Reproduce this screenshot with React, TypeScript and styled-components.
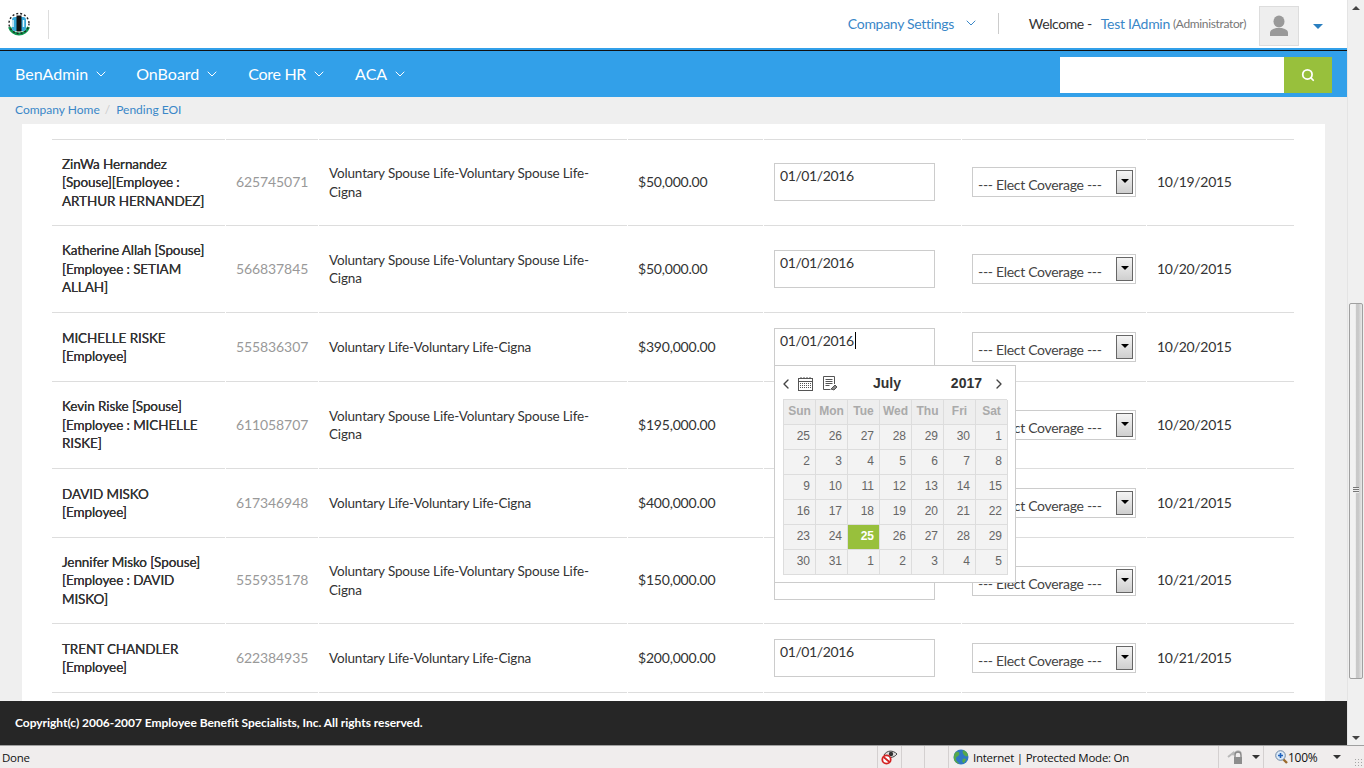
import React from "react";
import styled, { createGlobalStyle } from "styled-components";
import { ChevronDown, ChevronLeft, ChevronRight, Search } from "lucide-react";

const GlobalStyle = createGlobalStyle`
    html, body {
        margin: 0;
        padding: 0;
        height: 100%;
        overflow: hidden;
        font-family: "Lato", "Liberation Sans", sans-serif;
        color: #333;
    }
`;

const Shell = styled.div`
    display: flex;
    flex-direction: column;
    width: 1364px;
    height: 768px;
    overflow: hidden;
`;

const Viewport = styled.div`
    display: flex;
    height: 745px;
`;

const Page = styled.div`
    display: flex;
    flex-direction: column;
    width: 1347px;
    background: #efefef;
`;

const TopBar = styled.header`
    display: flex;
    align-items: center;
    height: 48px;
    background: #fff;
    flex: none;
`;

const LogoWrap = styled.div`
    display: flex;
    align-items: center;
    width: 49px;
    height: 29px;
    padding-left: 7px;
    box-sizing: border-box;
    border-right: 1px solid #ddd;
`;

const TopRight = styled.div`
    display: flex;
    align-items: center;
    margin-left: auto;
    height: 48px;
    padding-bottom: 2px;
    box-sizing: border-box;
`;

const SettingsLink = styled.a`
    display: flex;
    align-items: center;
    gap: 9px;
    width: 150px;
    height: 21px;
    font-size: 14px;
    letter-spacing: -0.3px;
    color: #3a87c8;
    border-right: 1px solid #ccc;
`;

const Welcome = styled.span`
    margin-left: 30px;
    font-size: 14px;
    letter-spacing: -0.4px;
    color: #333;
`;

const UserName = styled.a`
    margin-left: 9px;
    font-size: 14px;
    letter-spacing: -0.3px;
    color: #3a87c8;
`;

const Role = styled.span`
    margin-left: 3px;
    font-size: 12px;
    letter-spacing: -0.35px;
    color: #777;
`;

const Avatar = styled.div`
    display: flex;
    align-items: center;
    justify-content: center;
    width: 40px;
    height: 40px;
    margin-left: 13px;
    margin-top: 6px;
    box-sizing: border-box;
    background: #eee;
    border: 1px solid #ddd;
`;

const Caret = styled.span`
    width: 0;
    height: 0;
    margin: 6px 24px 0 14px;
    border-left: 5px solid transparent;
    border-right: 5px solid transparent;
    border-top: 5px solid #2a7fc0;
`;

const NavBar = styled.nav`
    display: flex;
    align-items: center;
    flex: none;
    height: 49px;
    box-sizing: border-box;
    padding: 3px 15px 0;
    background: #32a0e9;
    border-top: 2px solid #32a0e9;
    box-shadow: inset 0 1px 0 #111;
`;

const NavItem = styled.a<{ $gap: number; $tight?: boolean }>`
    display: flex;
    align-items: center;
    gap: 5px;
    margin-top: -4px;
    margin-right: ${(p) => p.$gap}px;
    font-size: 16px;
    letter-spacing: ${(p) => (p.$tight ? "-0.3px" : "0")};
    color: #fff;
    svg {
        margin-top: 2px;
    }
`;

const SearchBox = styled.div`
    display: flex;
    margin-left: auto;
    height: 36px;
`;

const SearchInput = styled.div`
    width: 224px;
    background: #fff;
`;

const SearchButton = styled.div`
    display: flex;
    align-items: center;
    justify-content: center;
    width: 48px;
    background: #98c03c;
`;

const Breadcrumb = styled.div`
    display: flex;
    align-items: center;
    flex: none;
    height: 27px;
    padding: 0 15px 2px;
    box-sizing: border-box;
    font-size: 12px;
    color: #3a87c8;
`;

const Slash = styled.span`
    margin: 0 6px 0 5px;
    color: #ccc;
`;

const Card = styled.main`
    flex: 1;
    margin: 0 22px;
    padding: 15px 31px 0 30px;
    min-height: 0;
    overflow: hidden;
    background: #fff;
`;

const Row = styled.div<{ $height: number }>`
    display: grid;
    grid-template-columns: 173px 92px 308px 135px 197px 184px 147px;
    column-gap: 1px;
    height: ${(p) => p.$height}px;
`;

const Cell = styled.div`
    display: flex;
    align-items: center;
    min-width: 0;
    padding: 0 10px;
    border-top: 1px solid #ddd;
    font-size: 14px;
    line-height: 18.5px;
    color: #333;
`;

const NameCell = styled(Cell)`
    font-size: 13.5px;
    letter-spacing: -0.1px;
    text-shadow: 0 0 0.5px #333;
`;

const SsnCell = styled(Cell)`
    letter-spacing: -0.1px;
    color: #999;
`;

const PlanCell = styled(Cell)`
    font-size: 13.5px;
    letter-spacing: -0.16px;
`;

const AmountCell = styled(Cell)`
    letter-spacing: -0.2px;
`;

const EffectiveCell = styled(Cell)`
    letter-spacing: -0.3px;
`;

const DateField = styled.div<{ $lift?: boolean }>`
    position: relative;
    width: 161px;
    height: 38px;
    margin-top: ${(p) => (p.$lift ? "-1px" : "0")};
    box-sizing: border-box;
    padding: 3px 5px;
    background: #fff;
    border: 1px solid #ccc;
    letter-spacing: -0.4px;
`;

const TextCursor = styled.span`
    display: inline-block;
    width: 1px;
    height: 17px;
    margin-left: 1px;
    background: #000;
    vertical-align: -3px;
`;

const SelectBox = styled.div<{ $lift?: boolean }>`
    display: flex;
    align-items: center;
    justify-content: space-between;
    width: 164px;
    height: 30px;
    margin-top: ${(p) => (p.$lift ? "-1px" : "0")};
    padding: 2px 2px 2px 5px;
    box-sizing: border-box;
    border: 1px solid #ccc;
    font-size: 14px;
    letter-spacing: -0.3px;
    color: #444;
`;

const SelectText = styled.span`
    padding-top: 7px;
`;

const SelectArrow = styled.span`
    display: flex;
    align-items: center;
    justify-content: center;
    flex: none;
    width: 17px;
    height: 24px;
    box-sizing: border-box;
    background: linear-gradient(#f4f4f4, #cfcfcf);
    border: 1px solid #666;
    &::after {
        content: "";
        margin-top: -2px;
        border-left: 4px solid transparent;
        border-right: 4px solid transparent;
        border-top: 4px solid #000;
    }
`;

const Calendar = styled.div`
    position: absolute;
    top: 36px;
    left: -1px;
    z-index: 5;
    width: 242px;
    height: 218px;
    box-sizing: border-box;
    padding: 0 8px;
    background: #fff;
    border: 1px solid #ccc;
    font-family: "Liberation Sans", Arial, sans-serif;
    letter-spacing: 0;
`;

const CalHeader = styled.div`
    display: flex;
    align-items: center;
    height: 33px;
    padding-top: 2px;
    box-sizing: border-box;
    font-size: 14px;
    font-weight: 700;
    color: #333;
`;

const CalMonth = styled.span`
    margin-left: 35px;
`;

const CalYear = styled.span`
    margin-left: auto;
    margin-right: 9px;
`;

const CalGrid = styled.div`
    display: grid;
    grid-template-columns: repeat(7, 32px);
    grid-auto-rows: 25px;
    width: 224px;
    box-sizing: border-box;
    border-top: 1px solid #ddd;
    border-left: 1px solid #ddd;
`;

const DayHead = styled.div`
    display: flex;
    align-items: center;
    justify-content: center;
    box-sizing: border-box;
    padding-bottom: 2px;
    background: #eee;
    border-right: 1px solid #ddd;
    border-bottom: 1px solid #ddd;
    font-size: 12px;
    font-weight: 700;
    color: #aaa;
`;

const Day = styled.div<{ $active?: boolean }>`
    display: flex;
    align-items: center;
    justify-content: flex-end;
    box-sizing: border-box;
    padding: 0 5px 2px 0;
    background: ${(p) => (p.$active ? "#98c03c" : "#f3f3f3")};
    border-right: 1px solid #ddd;
    border-bottom: 1px solid #ddd;
    font-size: 12px;
    font-weight: ${(p) => (p.$active ? 700 : 400)};
    color: ${(p) => (p.$active ? "#fff" : "#666")};
`;

const CalIcons = styled.span`
    display: flex;
    align-items: center;
    gap: 10px;
`;

const Footer = styled.footer`
    display: flex;
    align-items: center;
    flex: none;
    height: 44px;
    padding: 0 15px 2px;
    box-sizing: border-box;
    background: #262626;
    font-size: 12px;
    font-weight: 700;
    letter-spacing: -0.03px;
    color: #fff;
`;

const ScrollTrack = styled.div`
    position: relative;
    flex: none;
    width: 17px;
    background: #f0f0f0;
    border-left: 1px solid #e4e4e4;
    box-sizing: border-box;
`;

const ScrollArrow = styled.span<{ $down?: boolean }>`
    position: absolute;
    left: 4px;
    ${(p) => (p.$down ? "bottom: 5px;" : "top: 6px;")}
    border-left: 4px solid transparent;
    border-right: 4px solid transparent;
    ${(p) => (p.$down ? "border-top: 4px solid #444;" : "border-bottom: 4px solid #444;")}
`;

const ScrollThumb = styled.div`
    position: absolute;
    top: 303px;
    left: 1px;
    width: 14px;
    height: 376px;
    box-sizing: border-box;
    background: linear-gradient(90deg, #f2f2f2 0 45%, #c9c9c9 50% 70%, #e8e8e8 100%);
    border: 1px solid #a0a0a0;
    border-radius: 2px;
    &::after {
        content: "";
        position: absolute;
        top: 183px;
        left: 3px;
        width: 6px;
        height: 6px;
        background: repeating-linear-gradient(#777 0 1px, #eee 1px 2px);
    }
`;

const StatusBar = styled.div`
    position: relative;
    display: flex;
    align-items: center;
    flex: none;
    height: 23px;
    border-top: 1px solid #a0a0a0;
    box-sizing: border-box;
    background: #f0eded;
    font-family: "Open Sans", "Liberation Sans", sans-serif;
    font-size: 11.5px;
    letter-spacing: -0.25px;
    color: #111;
`;

const StatusDone = styled.span`
    width: 877px;
    padding-left: 2px;
    box-sizing: border-box;
`;

const StatusPane = styled.div<{ $width: number; $inset?: number }>`
    display: flex;
    align-items: center;
    justify-content: flex-start;
    gap: 4px;
    width: ${(p) => p.$width}px;
    height: 22px;
    padding-left: ${(p) => p.$inset ?? 4}px;
    box-sizing: border-box;
    border-left: 1px solid #d4d0d0;
`;

const ZoomLabel = styled.span`
    margin-left: -4px;
    font-size: 12px;
`;

const SmallCaret = styled.span<{ $offset?: number }>`
    margin-left: ${(p) => p.$offset ?? 3}px;
    border-left: 4px solid transparent;
    border-right: 4px solid transparent;
    border-top: 4px solid #333;
`;

const ResizeGrip = styled.span`
    position: absolute;
    right: 1px;
    bottom: 1px;
    width: 9px;
    height: 9px;
    background: radial-gradient(circle, #a5a5a5 0 1px, transparent 1px) 0 0 / 3px 3px;
`;

const Logo = () => (
    <svg width="24" height="24" viewBox="0 0 24 24">
        <path d="M2.5 15a10 10 0 0 0 19 0" fill="none" stroke="#0f9a4f" strokeWidth="3" />
        <circle cx="12" cy="11.5" r="10" fill="none" stroke="#222" strokeWidth="1.4" strokeDasharray="2 2" />
        <rect x="5" y="5" width="14" height="14" rx="3" fill="#35a7d8" />
        <rect x="9.5" y="3.5" width="5" height="16" fill="#111" />
        <path d="M6 8v7M16.5 8v7" stroke="#e8f6fb" strokeWidth="1.5" />
    </svg>
);

const UserIcon = () => (
    <svg width="20" height="22" viewBox="0 0 20 22">
        <ellipse cx="10" cy="6.5" rx="5.5" ry="6" fill="#999" />
        <path d="M1 21v-3c0-3 3-4 6-5h6c3 1 6 2 6 5v3z" fill="#999" />
    </svg>
);

const CalendarIcon = () => (
    <svg width="15" height="14" viewBox="0 0 15 14" fill="none" stroke="#555">
        <rect x="0.5" y="1.5" width="14" height="12" />
        <path d="M0.5 4.5h14" />
        <path d="M2 6.5h11M2 8.5h11M2 10.5h11" strokeDasharray="1 1" />
        <path d="M3 0v2M6 0v2M9 0v2M12 0v2" />
    </svg>
);

const NoteIcon = () => (
    <svg width="15" height="15" viewBox="0 0 15 15" fill="none" stroke="#555">
        <path d="M11.5 8V.5h-11v13h7" />
        <path d="M2.5 3.5h7M2.5 5.5h7M2.5 7.5h7M2.5 9.5h4" />
        <path d="M8 13l4-4 2 2-3 3z" fill="#888" />
    </svg>
);

const BlockedEye = () => (
    <svg width="17" height="16" viewBox="0 0 17 16">
        <path d="M3 6c3-5 9-5 13-1-3 4-9 5-13 1z" fill="#ddd" stroke="#444" />
        <circle cx="10" cy="5" r="2.2" fill="#333" />
        <circle cx="5.5" cy="10.5" r="4.2" fill="#fff" stroke="#d32222" strokeWidth="1.8" />
        <path d="M2.5 8l6 5" stroke="#d32222" strokeWidth="1.8" />
    </svg>
);

const Globe = () => (
    <svg width="16" height="16" viewBox="0 0 16 16">
        <circle cx="8" cy="8" r="7.5" fill="#2f77c4" />
        <path d="M3 3c3-1 4 1 3 3S3 7 3 10s3 3 3 5c-3-1-6-3-5-8 0-2 1-3 2-4zM10 1c3 1 5 3 5 6-2 1-3 0-4-1s-2-3-1-5zM10 10c2-1 3 0 3 1l-2 3c-2 0-2-3-1-4z" fill="#55a84a" />
    </svg>
);

const LockIcon = () => (
    <svg width="18" height="16" viewBox="0 0 18 16">
        <path d="M1 8l5-4v2c2-4 6-5 8-2" fill="none" stroke="#b9b9b9" strokeWidth="2" />
        <path d="M8 8V6a3 3 0 0 1 6 0v2" fill="none" stroke="#888" strokeWidth="1.4" />
        <rect x="7" y="8" width="8" height="7" fill="#8d8d8d" />
    </svg>
);

const ZoomIcon = () => (
    <svg width="13" height="14" viewBox="0 0 13 14">
        <path d="M8 9l4 4" stroke="#9a6a2c" strokeWidth="2.4" />
        <circle cx="5.5" cy="5.5" r="4.8" fill="#dbe9f7" stroke="#6d87a5" />
        <path d="M5.5 3v5M3 5.5h5" stroke="#1f62bd" strokeWidth="1.6" />
    </svg>
);

type Person = { name: string; ssn: string; plan: string; amount: string; date: string; effective: string; height: number };

const spousePlan = "Voluntary Spouse Life-Voluntary Spouse Life-Cigna";
const lifePlan = "Voluntary Life-Voluntary Life-Cigna";

// rows 4 to 6 sit under the open date picker, so their date text never shows
const people: Person[] = [
    { name: "ZinWa Hernandez [Spouse][Employee : ARTHUR HERNANDEZ]", ssn: "625745071", plan: spousePlan, amount: "$50,000.00", date: "01/01/2016", effective: "10/19/2015", height: 86 },
    { name: "Katherine Allah [Spouse] [Employee : SETIAM ALLAH]", ssn: "566837845", plan: spousePlan, amount: "$50,000.00", date: "01/01/2016", effective: "10/20/2015", height: 87 },
    { name: "MICHELLE RISKE [Employee]", ssn: "555836307", plan: lifePlan, amount: "$390,000.00", date: "01/01/2016", effective: "10/20/2015", height: 69 },
    { name: "Kevin Riske [Spouse] [Employee : MICHELLE RISKE]", ssn: "611058707", plan: spousePlan, amount: "$195,000.00", date: "", effective: "10/20/2015", height: 87 },
    { name: "DAVID MISKO [Employee]", ssn: "617346948", plan: lifePlan, amount: "$400,000.00", date: "", effective: "10/21/2015", height: 69 },
    { name: "Jennifer Misko [Spouse] [Employee : DAVID MISKO]", ssn: "555935178", plan: spousePlan, amount: "$150,000.00", date: "", effective: "10/21/2015", height: 86 },
    { name: "TRENT CHANDLER [Employee]", ssn: "622384935", plan: lifePlan, amount: "$200,000.00", date: "01/01/2016", effective: "10/21/2015", height: 69 },
];

const weekDays = ["Sun", "Mon", "Tue", "Wed", "Thu", "Fri", "Sat"];
const days = [25, 26, 27, 28, 29, 30, 1, 2, 3, 4, 5, 6, 7, 8, 9, 10, 11, 12, 13, 14, 15, 16, 17, 18, 19, 20, 21, 22, 23, 24, 25, 26, 27, 28, 29, 30, 31, 1, 2, 3, 4, 5];

const DatePopup = () => (
    <Calendar>
        <CalHeader>
            <ChevronLeft size={16} color="#444" style={{ marginLeft: -5, marginRight: 4 }} />
            <CalIcons>
                <CalendarIcon />
                <NoteIcon />
            </CalIcons>
            <CalMonth>July</CalMonth>
            <CalYear>2017</CalYear>
            <ChevronRight size={16} color="#444" />
        </CalHeader>
        <CalGrid>
            {weekDays.map((d) => (
                <DayHead key={d}>{d}</DayHead>
            ))}
            {days.map((d, i) => (
                <Day key={i} $active={i === 30}>
                    {d}
                </Day>
            ))}
        </CalGrid>
    </Calendar>
);

export default function App() {
    return (
        <Shell>
            <GlobalStyle />
            <Viewport>
                <Page>
                    <TopBar>
                        <LogoWrap>
                            <Logo />
                        </LogoWrap>
                        <TopRight>
                            <SettingsLink>
                                Company Settings
                                <ChevronDown size={16} color="#3a87c8" strokeWidth={1.5} />
                            </SettingsLink>
                            <Welcome>Welcome -</Welcome>
                            <UserName>Test IAdmin</UserName>
                            <Role>(Administrator)</Role>
                            <Avatar>
                                <UserIcon />
                            </Avatar>
                            <Caret />
                        </TopRight>
                    </TopBar>
                    <NavBar>
                        <NavItem $gap={27}>
                            BenAdmin <ChevronDown size={16} strokeWidth={1.5} />
                        </NavItem>
                        <NavItem $gap={28}>
                            OnBoard <ChevronDown size={16} strokeWidth={1.5} />
                        </NavItem>
                        <NavItem $gap={28} $tight>
                            Core HR <ChevronDown size={16} strokeWidth={1.5} />
                        </NavItem>
                        <NavItem $gap={0}>
                            ACA <ChevronDown size={16} strokeWidth={1.5} />
                        </NavItem>
                        <SearchBox>
                            <SearchInput />
                            <SearchButton>
                                <Search size={14} color="#fff" strokeWidth={3} />
                            </SearchButton>
                        </SearchBox>
                    </NavBar>
                    <Breadcrumb>
                        Company Home<Slash>/</Slash>Pending EOI
                    </Breadcrumb>
                    <Card>
                        {people.map((p, i) => (
                            <Row key={i} $height={p.height}>
                                <NameCell>{p.name}</NameCell>
                                <SsnCell>{p.ssn}</SsnCell>
                                <PlanCell>{p.plan}</PlanCell>
                                <AmountCell>{p.amount}</AmountCell>
                                <Cell>
                                    <DateField $lift={i === 0}>
                                        {p.date}
                                        {i === 2 && <TextCursor />}
                                        {i === 2 && <DatePopup />}
                                    </DateField>
                                </Cell>
                                <Cell>
                                    <SelectBox $lift={i === 0}>
                                        <SelectText>--- Elect Coverage ---</SelectText>
                                        <SelectArrow />
                                    </SelectBox>
                                </Cell>
                                <EffectiveCell>{p.effective}</EffectiveCell>
                            </Row>
                        ))}
                        <Row $height={9}>
                            <Cell />
                            <Cell />
                            <Cell />
                            <Cell />
                            <Cell />
                            <Cell />
                            <Cell />
                        </Row>
                    </Card>
                    <Footer>Copyright(c) 2006-2007 Employee Benefit Specialists, Inc. All rights reserved.</Footer>
                </Page>
                <ScrollTrack>
                    <ScrollArrow />
                    <ScrollThumb />
                    <ScrollArrow $down />
                </ScrollTrack>
            </Viewport>
            <StatusBar>
                <StatusDone>Done</StatusDone>
                <StatusPane $width={24} $inset={3}>
                    <BlockedEye />
                </StatusPane>
                <StatusPane $width={23} />
                <StatusPane $width={24} />
                <StatusPane $width={270}>
                    <Globe />
                    Internet | Protected Mode: On
                </StatusPane>
                <StatusPane $width={45} $inset={8}>
                    <LockIcon />
                    <SmallCaret />
                </StatusPane>
                <StatusPane $width={101} $inset={11}>
                    <ZoomIcon />
                    <ZoomLabel>100%</ZoomLabel>
                    <SmallCaret $offset={11} />
                </StatusPane>
                <ResizeGrip />
            </StatusBar>
        </Shell>
    );
}
